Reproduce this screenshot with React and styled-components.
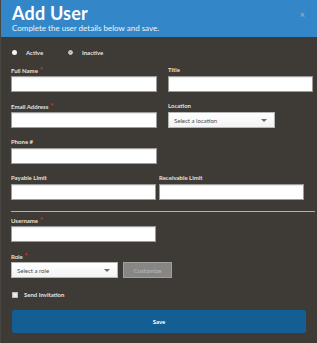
import React from 'react';
import styled, { createGlobalStyle, css } from 'styled-components';

const GlobalStyle = createGlobalStyle`
    html, body {
        margin: 0;
        padding: 0;
        background: #3e3a36;
    }
    body {
        font-family: Lato, "Open Sans", "Liberation Sans", sans-serif;
    }
`;

const StyledModal = styled.div`
    width: 317px;
    height: 343px;
    background-color: #3e3a36;
    border-left: 1px solid #4a4642;
    box-sizing: border-box;
    overflow: hidden;
`;

const StyledHeader = styled.div`
    position: relative;
    height: 37px;
    box-sizing: border-box;
    padding: 4px 11px 0;
    background-color: #3386c8;
    color: #ffffff;
`;

const StyledTitle = styled.h1`
    margin: 0;
    font-size: 18px;
    line-height: 18px;
    font-weight: 700;
    letter-spacing: 0.2px;
`;

const StyledSubtitle = styled.p`
    margin: 1px 0 0;
    font-size: 8px;
    line-height: 10px;
    color: #eef4fb;
`;

const StyledClose = styled.span`
    position: absolute;
    top: 10px;
    right: 12px;
    font-size: 9px;
    line-height: 10px;
    color: #9fb3c8;
`;

const StyledBody = styled.div`
    padding: 10px 0 0 10px;
`;

const StyledRadioRow = styled.div`
    display: flex;
    align-items: center;
    height: 10px;
`;

const StyledRadioOption = styled.label`
    display: flex;
    align-items: center;
    width: 56px;
    font-size: 6px;
    font-weight: 700;
    color: #e6e3e0;
`;

const StyledRadioDot = styled.span`
    display: inline-block;
    width: 5px;
    height: 5px;
    margin: 0 9px 0 1px;
    border-radius: 50%;
    background-color: #f4f4f4;
    box-sizing: border-box;

    ${props => props.checked && css`
        background-color: #d6d6d6;
        border: 1px solid #bdbdbd;
        box-shadow: inset 0 0 0 1px #d6d6d6, inset 0 0 0 3px #7c7c7c;
    `}
`;

const StyledRow = styled.div`
    display: grid;
    grid-template-columns: ${props => props.columns || '146px 145px'};
    column-gap: ${props => props.gap ?? 11}px;
    margin-top: ${props => props.top ?? 10}px;
`;

const StyledField = styled.div`
    display: flex;
    flex-direction: column;
`;

const StyledLabel = styled.label`
    height: 8px;
    margin-bottom: 2px;
    font-size: 6px;
    font-weight: 700;
    line-height: 8px;
    color: #e4e1de;
    white-space: nowrap;
`;

const StyledRequired = styled.span`
    display: inline-block;
    margin-left: 2px;
    font-size: 7px;
    line-height: 8px;
    color: #e0302f;
`;

const StyledInput = styled.div`
    height: 16px;
    box-sizing: border-box;
    background-color: #ffffff;
    border: 1px solid #9c9c9c;
    box-shadow: inset 0 1px 1px rgba(0, 0, 0, 0.08);
`;

const StyledSelect = styled.div`
    display: flex;
    align-items: center;
    justify-content: space-between;
    width: ${props => props.width}px;
    height: 16px;
    box-sizing: border-box;
    padding: 0 7px 0 5px;
    background: linear-gradient(#ffffff, #f3f3f3);
    border: 1px solid #b5b5b5;
    font-size: 6px;
    color: #4a4a4a;
`;

const StyledCaret = styled.span`
    width: 0;
    height: 0;
    border-left: 3px solid transparent;
    border-right: 3px solid transparent;
    border-top: 3px solid #6b6b6b;
    margin-top: 1px;
`;

const StyledDivider = styled.hr`
    margin: 11px 0 4px;
    width: 304px;
    height: 1px;
    border: 0;
    background-color: #b4b0ac;
`;

const StyledRoleRow = styled.div`
    display: flex;
    align-items: center;
    gap: 5px;
`;

const StyledCustomize = styled.button`
    width: 49px;
    height: 16px;
    padding: 0;
    box-sizing: border-box;
    background-color: #878685;
    border: 1px solid #a09f9e;
    color: #bdbcbb;
    font-family: inherit;
    font-size: 6px;
`;

const StyledCheckRow = styled.label`
    display: flex;
    align-items: center;
    height: 9px;
    margin-top: 12px;
    font-size: 6px;
    font-weight: 700;
    color: #e6e3e0;
`;

const StyledCheckbox = styled.span`
    width: 6px;
    height: 6px;
    margin: 0 6px 0 1px;
    background-color: #e9e9e9;
    border: 1px solid #bcbcbc;
    box-sizing: border-box;
`;

const StyledSave = styled.button`
    display: block;
    width: 294px;
    height: 23px;
    margin-top: 11px;
    margin-left: 1px;
    padding: 0;
    border: 0;
    border-radius: 2px;
    background-color: #135e92;
    color: #ffffff;
    font-family: inherit;
    font-size: 6px;
    font-weight: 700;
`;

function Field({ label, required, children }) {
    return (
        <StyledField>
            <StyledLabel>
                {label}
                {required && <StyledRequired>*</StyledRequired>}
            </StyledLabel>
            {children}
        </StyledField>
    );
}

function Select({ placeholder, width }) {
    return (
        <StyledSelect width={width}>
            <span>{placeholder}</span>
            <StyledCaret />
        </StyledSelect>
    );
}

export default function App() {
    return (
        <StyledModal>
            <GlobalStyle />
            <StyledHeader>
                <StyledTitle>Add User</StyledTitle>
                <StyledSubtitle>Complete the user details below and save.</StyledSubtitle>
                <StyledClose>×</StyledClose>
            </StyledHeader>

            <StyledBody>
                <StyledRadioRow>
                    <StyledRadioOption>
                        <StyledRadioDot />
                        Active
                    </StyledRadioOption>
                    <StyledRadioOption>
                        <StyledRadioDot checked />
                        Inactive
                    </StyledRadioOption>
                </StyledRadioRow>

                <StyledRow top={9}>
                    <Field label="Full Name" required>
                        <StyledInput />
                    </Field>
                    <Field label="Title">
                        <StyledInput />
                    </Field>
                </StyledRow>

                <StyledRow>
                    <Field label="Email Address" required>
                        <StyledInput />
                    </Field>
                    <Field label="Location">
                        <Select placeholder="Select a location" width={107} />
                    </Field>
                </StyledRow>

                <StyledRow>
                    <Field label="Phone #">
                        <StyledInput />
                    </Field>
                </StyledRow>

                <StyledRow columns="145px 145px" gap={3}>
                    <Field label="Payable Limit">
                        <StyledInput />
                    </Field>
                    <Field label="Receivable Limit">
                        <StyledInput />
                    </Field>
                </StyledRow>

                <StyledDivider />

                <StyledRow top={0} columns="145px">
                    <Field label="Username" required>
                        <StyledInput />
                    </Field>
                </StyledRow>

                <StyledRow columns="1fr">
                    <Field label="Role" required>
                        <StyledRoleRow>
                            <Select placeholder="Select a role" width={107} />
                            <StyledCustomize>Customize</StyledCustomize>
                        </StyledRoleRow>
                    </Field>
                </StyledRow>

                <StyledCheckRow>
                    <StyledCheckbox />
                    Send Invitation
                </StyledCheckRow>

                <StyledSave>Save</StyledSave>
            </StyledBody>
        </StyledModal>
    );
}
